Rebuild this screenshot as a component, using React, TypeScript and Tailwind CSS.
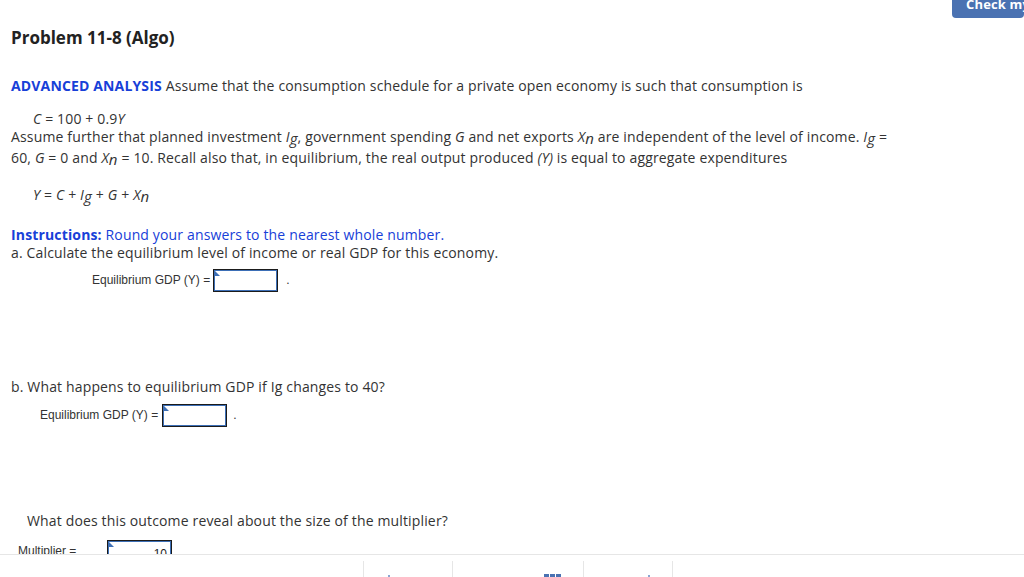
import React from "react";

const Sub = ({ base, sub }: { base: string; sub: string }) => (
  <span className="italic">
    {base}
    <sub className="text-[15px] relative top-[2px]">{sub}</sub>
  </span>
);

const AnswerBox = ({ value }: { value?: string }) => (
  <span className="relative inline-block h-[23px] w-[65px] border border-[#1b1b1b] align-middle">
    <span className="absolute inset-0 border border-[#3d6fb6]" />
    <span className="absolute left-[1px] top-[1px] h-0 w-0 border-l-[5px] border-t-[5px] border-l-[#3d6fb6] border-t-transparent" />
    {value && (
      <span className="absolute right-[4px] top-[3px] text-[12px] text-[#222]">{value}</span>
    )}
  </span>
);

const App: React.FC = () => {
  return (
    <div className="relative min-h-[577px] bg-white font-['Open_Sans',sans-serif] text-[14px] leading-[21px] tracking-[0.15px] text-[#333]">
      <button className="absolute right-0 top-[-9px] h-[27px] w-[72px] rounded-bl-[4px] rounded-br-[4px] bg-[#4a72b2] pl-[14px] text-left text-[13px] font-bold text-white whitespace-nowrap overflow-hidden">
        Check my work
      </button>

      <div className="px-[11px] pt-[27px]">
        <h1 className="text-[17px] font-bold leading-[22px] tracking-normal text-[#222]">Problem 11-8 (Algo)</h1>

        <p className="mt-[26px]">
          <span className="font-bold text-[#1740d8]">ADVANCED ANALYSIS</span> Assume that the consumption schedule for a private open economy is such that consumption is
        </p>

        <div className="mt-[15px] pl-[22px] leading-[15px]">
          <span className="italic">C</span> = 100 + 0.9<span className="italic">Y</span>
        </div>
        <p>
          Assume further that planned investment <Sub base="I" sub="g" />, government spending <span className="italic">G</span> and net exports <Sub base="X" sub="n" /> are independent of the level of income. <Sub base="I" sub="g" /> =
          <br />
          60, <span className="italic">G</span> = 0 and <Sub base="X" sub="n" /> = 10. Recall also that, in equilibrium, the real output produced <span className="italic">(Y)</span> is equal to aggregate expenditures
        </p>

        <div className="mt-[16px] pl-[22px]">
          <span className="italic">Y</span> = <span className="italic">C</span> + <Sub base="I" sub="g" /> + <span className="italic">G</span> + <Sub base="X" sub="n" />
        </div>

        <p className="mt-[21px] leading-[18px] text-[#1740d8]">
          <span className="font-bold">Instructions:</span> Round your answers to the nearest whole number.
        </p>
        <p className="leading-[17px]">a. Calculate the equilibrium level of income or real GDP for this economy.</p>

        <div className="mt-[8px] flex items-center pl-[81px] font-['Liberation_Sans',sans-serif] text-[12px] tracking-normal">
          <span className="mr-[3px]">Equilibrium GDP (Y) =</span>
          <AnswerBox />
          <span className="ml-[8px]">.</span>
        </div>

        <p className="mt-[84px]">b. What happens to equilibrium GDP if Ig changes to 40?</p>

        <div className="mt-[7px] flex items-center pl-[29px] font-['Liberation_Sans',sans-serif] text-[12px] tracking-normal">
          <span className="mr-[4px]">Equilibrium GDP (Y) =</span>
          <AnswerBox />
          <span className="ml-[6px]">.</span>
        </div>

        <p className="mt-[83px] pl-[16px]">What does this outcome reveal about the size of the multiplier?</p>

        <div className="mt-[9px] flex items-center pl-[7px] font-['Liberation_Sans',sans-serif] text-[12px] tracking-normal">
          <span className="w-[89px]">Multiplier =</span>
          <span className="w-[62px]">
            <AnswerBox value="10" />
          </span>
        </div>
      </div>

      <div className="fixed bottom-0 left-0 right-0 h-[23px] border-t border-[#e6e6e6] bg-white">
        <div className="flex h-full pt-[6px] pl-[363px]">
          <div className="relative w-[89px] border-l border-[#e6e6e6]">
            <span className="absolute left-[24px] bottom-0 h-[2px] w-[2px] bg-[#8aa6d3]" />
          </div>
          <div className="relative w-[131px] border-l border-[#e6e6e6]">
            <span className="absolute left-[91px] bottom-0 flex gap-[1px]">
              <span className="h-[3px] w-[5px] bg-[#4a72b2]" />
              <span className="h-[3px] w-[5px] bg-[#4a72b2]" />
              <span className="h-[3px] w-[5px] bg-[#4a72b2]" />
            </span>
          </div>
          <div className="relative w-[90px] border-l border-[#e6e6e6] border-r">
            <span className="absolute left-[64px] bottom-0 h-[2px] w-[2px] bg-[#8aa6d3]" />
          </div>
        </div>
      </div>
    </div>
  );
};

export default App;
